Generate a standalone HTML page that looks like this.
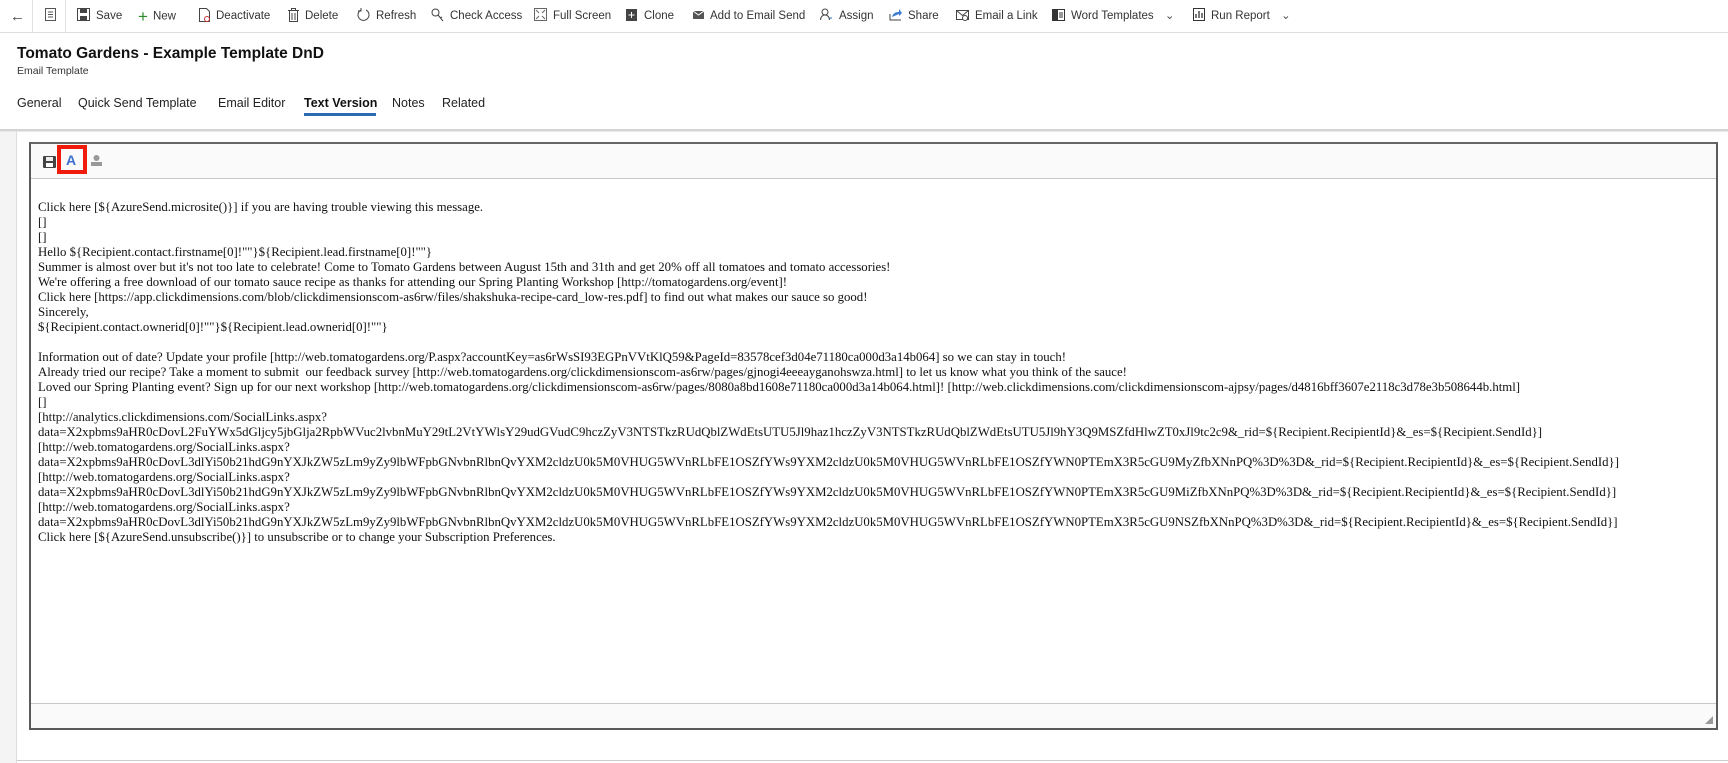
<!DOCTYPE html>
<html><head><meta charset="utf-8"><style>
*{margin:0;padding:0;box-sizing:border-box}
body{width:1728px;height:763px;overflow:hidden;background:#fff;font-family:"Liberation Sans",sans-serif;color:#222;position:relative}
.tb{position:absolute;left:0;top:0;width:1728px;height:33px;border-bottom:1px solid #ddd;background:#fff}
.tb .it{position:absolute;top:1px;height:31px;line-height:31px;font-size:11.5px;color:#333;white-space:nowrap}
.sep{position:absolute;top:0;width:1px;height:33px;background:#e1e1e1}
.ic{display:inline-block;vertical-align:middle;margin-right:6px;margin-top:-2px}
h1{position:absolute;left:17px;top:45px;font-size:15.5px;font-weight:bold;color:#111}
.sub{position:absolute;left:17px;top:65px;font-size:10.5px;color:#333}
.tab{position:absolute;top:96px;font-size:12.5px;color:#222}
.ul{position:absolute;left:304px;top:113px;width:72px;height:3px;background:#2a6ab0}
.hl{position:absolute;left:0;top:129px;width:1728px;height:3px;background:#d4d4d4;border-bottom:1px solid #e8e8e8}
.lg{position:absolute;left:0;top:132px;width:17px;height:631px;background:#f4f4f4;border-right:1px solid #ddd}
.box{position:absolute;left:29px;top:142px;width:1689px;height:588px;border:2px solid #5a5a5a;border-top-color:#666;background:#fff}
.etb{position:absolute;left:0;top:0;right:0;height:35px;background:#fafafa;border-bottom:1px solid #c8c8c8}
.txt{position:absolute;left:7px;top:56px;font-family:"Liberation Serif",serif;font-size:12.8px;line-height:15px;color:#111;white-space:pre}
.st{position:absolute;left:0;right:0;bottom:0;height:25px;background:#fafafa;border-top:1px solid #c8c8c8}
.bl{position:absolute;left:17px;top:760px;width:1711px;height:1px;background:#ccc}
</style></head><body>
<div class="tb">
<div class="it" style="left:10px;font-size:15px;color:#444">&#8592;</div>
<div class="sep" style="left:32px"></div>
<div class="it" style="left:45px"><svg class="ic" width="11" height="13"><rect x="0.5" y="0.5" width="10" height="12" fill="none" stroke="#555"/><path d="M3 4h5M3 6.5h5M3 9h5" stroke="#555"/></svg></div>
<div class="sep" style="left:65px"></div>
<div class="it" style="left:77px"><svg class="ic" width="13" height="13"><rect x=".5" y=".5" width="12" height="12" fill="#fff" stroke="#444"/><rect x="3" y="1" width="7" height="4" fill="#444"/><rect x="3" y="8" width="7" height="4" fill="#444"/></svg>Save</div>
<div class="it" style="left:138px"><span style="color:#2a8a2a;font-size:17px;margin-right:5px;vertical-align:middle">+</span>New</div>
<div class="it" style="left:199px"><svg class="ic" width="11" height="14"><path d="M.5 .5h7l3 3v10h-10z" fill="none" stroke="#444"/><circle cx="8" cy="11" r="2.5" fill="#fff" stroke="#c33"/></svg>Deactivate</div>
<div class="it" style="left:288px"><svg class="ic" width="11" height="14"><path d="M0 2.5h11M3.5 2V.5h4V2M1.5 3v10.5h8V3M4 5v7M7 5v7" fill="none" stroke="#444"/></svg>Delete</div>
<div class="it" style="left:357px"><svg class="ic" width="13" height="13"><path d="M4 2A5.5 5.5 0 1 0 9 2" fill="none" stroke="#444"/><path d="M4 0v3H1" fill="none" stroke="#444"/></svg>Refresh</div>
<div class="it" style="left:431px"><svg class="ic" width="13" height="14"><circle cx="4.5" cy="4.5" r="3.5" fill="none" stroke="#444"/><path d="M7 7l5 6M9 10l2-1" stroke="#444"/></svg>Check Access</div>
<div class="it" style="left:534px"><svg class="ic" width="13" height="13"><rect x=".5" y=".5" width="12" height="12" fill="none" stroke="#666"/><path d="M2 2l3 3M11 2l-3 3M2 11l3-3M11 11l-3-3" stroke="#666"/></svg>Full Screen</div>
<div class="it" style="left:626px"><svg class="ic" width="12" height="13"><rect x="0" y="1" width="11" height="12" fill="#444"/><path d="M5.5 4v6M2.5 7h6" stroke="#fff"/></svg>Clone</div>
<div class="it" style="left:693px"><svg class="ic" width="11" height="9"><rect x="0" y="1" width="11" height="8" fill="#555"/><path d="M0 1l5.5 4 5.5-4" stroke="#fff" fill="none"/></svg>Add to Email Send</div>
<div class="it" style="left:820px"><svg class="ic" width="13" height="13"><circle cx="5" cy="4" r="3" fill="none" stroke="#444"/><path d="M.5 12c0-3 2-5 4.5-5s4.5 2 4.5 5" fill="none" stroke="#444"/><path d="M9 10h3" stroke="#2a6ab0"/></svg>Assign</div>
<div class="it" style="left:889px"><svg class="ic" width="13" height="13"><path d="M1 6v6h11" fill="none" stroke="#444"/><path d="M3 9c1-4 4-5 7-5V1l3 4-3 3V6" fill="#3a7bd5"/></svg>Share</div>
<div class="it" style="left:956px"><svg class="ic" width="13" height="12"><rect x=".5" y="1.5" width="12" height="9" fill="none" stroke="#444"/><path d="M.5 1.5l6 5 6-5" fill="none" stroke="#444"/><circle cx="9" cy="9" r="2.5" fill="#fff" stroke="#444"/></svg>Email a Link</div>
<div class="it" style="left:1052px"><svg class="ic" width="13" height="12"><rect x=".5" y=".5" width="12" height="11" fill="none" stroke="#333"/><rect x="1" y="1" width="5" height="10" fill="#333"/><path d="M7 4h4M7 6h4M7 8h4" stroke="#333"/></svg>Word Templates <span style="margin-left:8px;color:#555">&#8964;</span></div>
<div class="it" style="left:1193px"><svg class="ic" width="12" height="13"><rect x=".5" y=".5" width="11" height="12" fill="none" stroke="#333"/><path d="M3 10V6M6 10V3M9 10V5" stroke="#333" stroke-width="1.3"/></svg>Run Report <span style="margin-left:8px;color:#555">&#8964;</span></div>
</div>
<h1>Tomato Gardens - Example Template DnD</h1>
<div class="sub">Email Template</div>
<div class="tab" style="left:17px">General</div>
<div class="tab" style="left:78px">Quick Send Template</div>
<div class="tab" style="left:218px">Email Editor</div>
<div class="tab" style="left:304px;font-weight:bold;color:#111">Text Version</div>
<div class="tab" style="left:392px">Notes</div>
<div class="tab" style="left:442px">Related</div>
<div class="ul"></div>
<div class="hl"></div>
<div class="lg"></div>
<div class="box">
<div class="etb">
<svg style="position:absolute;left:12px;top:12px" width="13" height="12"><rect x="0" y="0" width="13" height="12" rx="1" fill="#444"/><rect x="3" y="1" width="7" height="4" fill="#eee"/><rect x="3" y="7" width="7" height="4" fill="#fff"/></svg>
<div style="position:absolute;left:26px;top:1px;width:30px;height:29px;border:4px solid #f01b0b"></div>
<div style="position:absolute;left:35px;top:8px;font-weight:bold;color:#3a6fd0;font-size:14px;font-family:'Liberation Sans',sans-serif">A</div>
<svg style="position:absolute;left:59px;top:10px" width="13" height="13"><circle cx="6.5" cy="4" r="3" fill="#999"/><rect x="1" y="8" width="11" height="4" fill="#999"/></svg>
</div>
<div class="txt">Click here [${AzureSend.microsite()}] if you are having trouble viewing this message.
[]
[]
Hello ${Recipient.contact.firstname[0]!""}${Recipient.lead.firstname[0]!""}
Summer is almost over but it's not too late to celebrate! Come to Tomato Gardens between August 15th and 31th and get 20% off all tomatoes and tomato accessories!
We're offering a free download of our tomato sauce recipe as thanks for attending our Spring Planting Workshop [http://tomatogardens.org/event]!
Click here [https://app.clickdimensions.com/blob/clickdimensionscom-as6rw/files/shakshuka-recipe-card_low-res.pdf] to find out what makes our sauce so good!
Sincerely,
${Recipient.contact.ownerid[0]!""}${Recipient.lead.ownerid[0]!""}

Information out of date? Update your profile [http://web.tomatogardens.org/P.aspx?accountKey=as6rWsSI93EGPnVVtKlQ59&amp;PageId=83578cef3d04e71180ca000d3a14b064] so we can stay in touch!
Already tried our recipe? Take a moment to submit  our feedback survey [http://web.tomatogardens.org/clickdimensionscom-as6rw/pages/gjnogi4eeeayganohswza.html] to let us know what you think of the sauce!
Loved our Spring Planting event? Sign up for our next workshop [http://web.tomatogardens.org/clickdimensionscom-as6rw/pages/8080a8bd1608e71180ca000d3a14b064.html]! [http://web.clickdimensions.com/clickdimensionscom-ajpsy/pages/d4816bff3607e2118c3d78e3b508644b.html]
[]
[http://analytics.clickdimensions.com/SocialLinks.aspx?
data=X2xpbms9aHR0cDovL2FuYWx5dGljcy5jbGlja2RpbWVuc2lvbnMuY29tL2VtYWlsY29udGVudC9hczZyV3NTSTkzRUdQblZWdEtsUTU5Jl9haz1hczZyV3NTSTkzRUdQblZWdEtsUTU5Jl9hY3Q9MSZfdHlwZT0xJl9tc2c9&amp;_rid=${Recipient.RecipientId}&amp;_es=${Recipient.SendId}]
[http://web.tomatogardens.org/SocialLinks.aspx?
data=X2xpbms9aHR0cDovL3dlYi50b21hdG9nYXJkZW5zLm9yZy9lbWFpbGNvbnRlbnQvYXM2cldzU0k5M0VHUG5WVnRLbFE1OSZfYWs9YXM2cldzU0k5M0VHUG5WVnRLbFE1OSZfYWN0PTEmX3R5cGU9MyZfbXNnPQ%3D%3D&amp;_rid=${Recipient.RecipientId}&amp;_es=${Recipient.SendId}]
[http://web.tomatogardens.org/SocialLinks.aspx?
data=X2xpbms9aHR0cDovL3dlYi50b21hdG9nYXJkZW5zLm9yZy9lbWFpbGNvbnRlbnQvYXM2cldzU0k5M0VHUG5WVnRLbFE1OSZfYWs9YXM2cldzU0k5M0VHUG5WVnRLbFE1OSZfYWN0PTEmX3R5cGU9MiZfbXNnPQ%3D%3D&amp;_rid=${Recipient.RecipientId}&amp;_es=${Recipient.SendId}]
[http://web.tomatogardens.org/SocialLinks.aspx?
data=X2xpbms9aHR0cDovL3dlYi50b21hdG9nYXJkZW5zLm9yZy9lbWFpbGNvbnRlbnQvYXM2cldzU0k5M0VHUG5WVnRLbFE1OSZfYWs9YXM2cldzU0k5M0VHUG5WVnRLbFE1OSZfYWN0PTEmX3R5cGU9NSZfbXNnPQ%3D%3D&amp;_rid=${Recipient.RecipientId}&amp;_es=${Recipient.SendId}]
Click here [${AzureSend.unsubscribe()}] to unsubscribe or to change your Subscription Preferences.</div>
<div class="st"><svg style="position:absolute;right:3px;bottom:4px" width="8" height="8"><path d="M8 0V8H0z" fill="#999"/></svg></div>
</div>
<div class="bl"></div>
</body></html>
